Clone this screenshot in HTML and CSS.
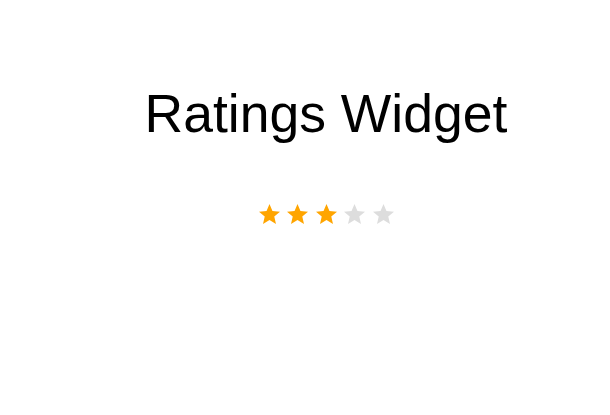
FILE: index.html
```html
<!DOCTYPE html>
<html>
<head>
<meta charset="utf-8">
<link rel="stylesheet" href="styles.css">
</head>
<body>
<main class="widget">
  <h1 class="title">Ratings Widget</h1>
  <div class="stars">
    <svg class="star on" viewBox="2 2 20 19"><path d="M12 17.27L18.18 21l-1.64-7.03L22 9.24l-7.19-.61L12 2 9.19 8.63 2 9.24l5.46 4.73L5.82 21z"/></svg>
    <svg class="star on" viewBox="2 2 20 19"><path d="M12 17.27L18.18 21l-1.64-7.03L22 9.24l-7.19-.61L12 2 9.19 8.63 2 9.24l5.46 4.73L5.82 21z"/></svg>
    <svg class="star on" viewBox="2 2 20 19"><path d="M12 17.27L18.18 21l-1.64-7.03L22 9.24l-7.19-.61L12 2 9.19 8.63 2 9.24l5.46 4.73L5.82 21z"/></svg>
    <svg class="star off" viewBox="2 2 20 19"><path d="M12 17.27L18.18 21l-1.64-7.03L22 9.24l-7.19-.61L12 2 9.19 8.63 2 9.24l5.46 4.73L5.82 21z"/></svg>
    <svg class="star off" viewBox="2 2 20 19"><path d="M12 17.27L18.18 21l-1.64-7.03L22 9.24l-7.19-.61L12 2 9.19 8.63 2 9.24l5.46 4.73L5.82 21z"/></svg>
  </div>
</main>
</body>
</html>
```
FILE: styles.css
```css
html, body {
  margin: 0;
  padding: 0;
  background: #fff;
}
.widget {
  display: flex;
  flex-direction: column;
  align-items: center;
  padding-left: 42px;
  padding-top: 84px;
  font-family: "Liberation Sans", Arial, sans-serif;
}
.title {
  margin: 0;
  font-size: 53.5px;
  font-weight: normal;
  line-height: 60px;
  color: #000;
}
.stars {
  display: flex;
  gap: 7.5px;
  margin-top: 60px;
}
.star {
  width: 21px;
  height: 20px;
  display: block;
}
.star.on { fill: #ffa500; }
.star.off { fill: #dddddd; }
```
